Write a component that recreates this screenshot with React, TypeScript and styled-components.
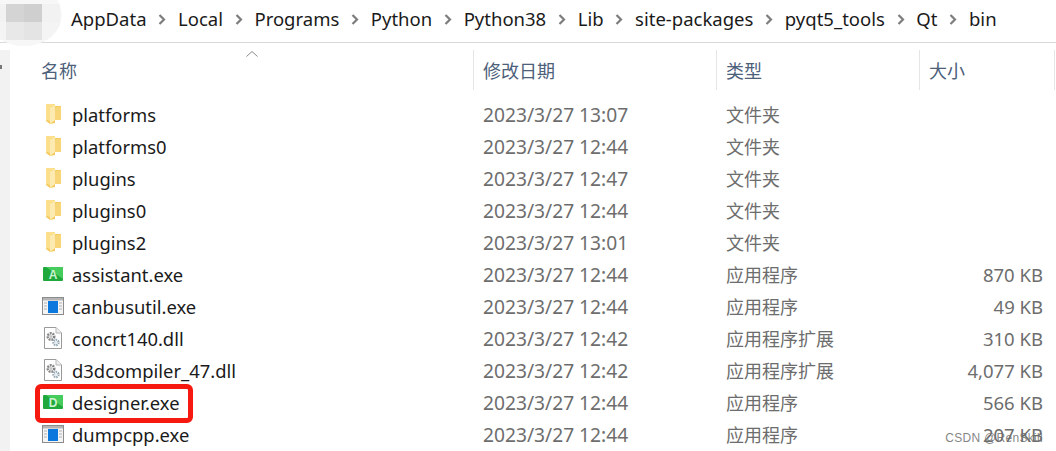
import React from 'react';
import styled, { createGlobalStyle } from 'styled-components';

const GlobalStyle = createGlobalStyle`
  html, body {
    margin: 0;
    padding: 0;
    background: #fff;
    overflow: hidden;
  }
  * {
    box-sizing: border-box;
  }
`;

const Window = styled.div`
  position: relative;
  width: 1056px;
  height: 451px;
  overflow: hidden;
  background: #fff;
  font-family: 'Noto Sans', 'Noto Sans CJK SC', sans-serif;
  font-size: 18px;
`;

const PathBar = styled.div`
  display: flex;
  align-items: center;
  gap: 11.75px;
  height: 43px;
  padding: 0 0 4px 71px;
  border-bottom: 1px solid #d9d9d9;
  color: #1a1a1a;
  font-size: 18.5px;
`;

const Crumb = styled.span`
  line-height: 1;
`;

const Blur = styled.div`
  position: absolute;
  left: -14px;
  top: -16px;
  width: 76px;
  height: 62px;
  border-radius: 50%;
  overflow: hidden;
  display: grid;
  grid-template-columns: repeat(4, 18px);
  grid-auto-rows: 18px;
  padding: 20px 0 0 2px;
  background: #f7f7f7;
`;

const Pixel = styled.i<{ $c: string }>`
  background: ${(p) => p.$c};
`;

const Main = styled.div`
  display: flex;
  height: 408px;
`;

const Gutter = styled.div`
  position: relative;
  width: 10px;
  margin-top: 7px;
  background: #f2f2f2;
  flex: none;
`;

const ScrollMark = styled.div`
  position: absolute;
  left: 0;
  top: 15px;
  width: 2px;
  height: 4px;
  background: #777;
`;

const Table = styled.div`
  flex: 1;
  padding-top: 7px;
`;

const Head = styled.div`
  position: relative;
  display: grid;
  grid-template-columns: 464px 243px 203px 135px;
  height: 40px;
  margin-bottom: 8px;
  color: #4c607a;
`;

const HeadCell = styled.div<{ $first?: boolean }>`
  display: flex;
  align-items: center;
  padding-left: ${(p) => (p.$first ? '31px' : '9px')};
  border-right: ${(p) => (p.$first ? 'none' : '1px solid #e5e5e5')};
  border-left: ${(p) => (p.$first ? 'none' : '1px solid #e5e5e5')};
  margin-left: ${(p) => (p.$first ? '0' : '-1px')};
`;

const SortMark = styled.svg`
  position: absolute;
  left: 236px;
  top: 1px;
`;

const Row = styled.div`
  display: grid;
  grid-template-columns: 463px 243px 203px 124px;
  height: 32px;
  align-items: center;
  color: #6d6d6d;
`;

const NameCell = styled.div`
  display: flex;
  align-items: center;
  padding-left: 31px;
  color: #1a1a1a;
  font-size: 18.4px;
`;

const IconSlot = styled.div`
  display: flex;
  justify-content: center;
  width: 24px;
  margin-right: 7px;
`;

const DateCell = styled.div`
  padding-left: 10px;
  font-size: 19.2px;
`;

const Cell = styled.div`
  padding-left: 10px;
`;

const SizeCell = styled.div`
  text-align: right;
  font-size: 18.5px;
`;

const Highlight = styled.div`
  position: absolute;
  left: 35px;
  top: 384px;
  width: 158px;
  height: 39px;
  border: 5px solid #f5190f;
  border-radius: 6px;
`;

const Watermark = styled.div`
  position: absolute;
  right: 13px;
  bottom: 6px;
  font-family: 'Liberation Sans', sans-serif;
  font-size: 12px;
  letter-spacing: 0.3px;
  color: rgba(110, 110, 110, 0.85);
`;

const FolderIcon = () => (
  <svg width="15" height="20" viewBox="0 0 15 20">
    <path d="M0 0h9v2h6v14H9v3l-5 1-4-3z" fill="#f4c95e" />
    <path d="M0 0h9v15H4v2l-4-1z" fill="#fbdf8c" />
    <path d="M4 4l5-3v15l-5 4z" fill="#fdeab0" />
    <path d="M9 3h6v13H9z" fill="#f8d677" />
  </svg>
);

const AppIcon = ({ letter }: { letter: string }) => (
  <svg width="20" height="14" viewBox="0 0 20 14">
    <rect width="20" height="14" rx="1" fill="#1fa83c" />
    <path d="M3 0h16a1 1 0 0 1 1 1v11L3 0z" fill="#45cc5c" />
    <text
      x="10"
      y="11.5"
      textAnchor="middle"
      fontSize="12"
      fontWeight="700"
      fontFamily="'Liberation Sans', sans-serif"
      fill="#c9f2cf"
    >
      {letter}
    </text>
  </svg>
);

const WindowIcon = () => (
  <svg width="22" height="18" viewBox="0 0 22 18">
    <rect x="0.5" y="0.5" width="21" height="17" fill="#f4f4f4" stroke="#8c8c8c" />
    <rect x="1" y="1" width="20" height="2.5" fill="#b5b5b5" />
    <rect x="6" y="4" width="10" height="12" fill="#0a78dc" />
    <path d="M2 6h3M2 9h3M2 12h3M17 6h3M17 9h3M17 12h3" stroke="#b0b0b0" />
  </svg>
);

const DllIcon = () => (
  <svg width="18" height="22" viewBox="0 0 18 22">
    <path d="M0.5 0.5H12L17.5 6V21.5H0.5z" fill="#fff" stroke="#9a9a9a" />
    <path d="M12 .5V6h5.5" fill="#f0f0f0" stroke="#b5b5b5" />
    <circle cx="7" cy="9.5" r="3.2" fill="none" stroke="#858585" strokeWidth="2.6" strokeDasharray="1.8 0.9" />
    <circle cx="7" cy="9.5" r="1.6" fill="#c9c9c9" />
    <circle cx="12" cy="15.5" r="2.6" fill="none" stroke="#93a7b5" strokeWidth="2.2" strokeDasharray="1.5 0.8" />
    <circle cx="12" cy="15.5" r="1.2" fill="#dfe6ea" />
  </svg>
);

type Kind = 'folder' | 'a' | 'd' | 'win' | 'dll';

const files: { name: string; date: string; type: string; size?: string; kind: Kind }[] = [
  { name: 'platforms', date: '2023/3/27 13:07', type: '文件夹', kind: 'folder' },
  { name: 'platforms0', date: '2023/3/27 12:44', type: '文件夹', kind: 'folder' },
  { name: 'plugins', date: '2023/3/27 12:47', type: '文件夹', kind: 'folder' },
  { name: 'plugins0', date: '2023/3/27 12:44', type: '文件夹', kind: 'folder' },
  { name: 'plugins2', date: '2023/3/27 13:01', type: '文件夹', kind: 'folder' },
  { name: 'assistant.exe', date: '2023/3/27 12:44', type: '应用程序', size: '870 KB', kind: 'a' },
  { name: 'canbusutil.exe', date: '2023/3/27 12:44', type: '应用程序', size: '49 KB', kind: 'win' },
  { name: 'concrt140.dll', date: '2023/3/27 12:42', type: '应用程序扩展', size: '310 KB', kind: 'dll' },
  { name: 'd3dcompiler_47.dll', date: '2023/3/27 12:42', type: '应用程序扩展', size: '4,077 KB', kind: 'dll' },
  { name: 'designer.exe', date: '2023/3/27 12:44', type: '应用程序', size: '566 KB', kind: 'd' },
  { name: 'dumpcpp.exe', date: '2023/3/27 12:44', type: '应用程序', size: '207 KB', kind: 'win' },
];

const crumbs = ['AppData', 'Local', 'Programs', 'Python', 'Python38', 'Lib', 'site-packages', 'pyqt5_tools', 'Qt', 'bin'];

const blurColors = ['#f2f2f2', '#d4d4d4', '#cfcfcf', '#f2f2f2', '#f4f4f4', '#e8e8e8', '#e4e4e4', '#f4f4f4'];

const icon = (kind: Kind) => {
  if (kind === 'folder') return <FolderIcon />;
  if (kind === 'a') return <AppIcon letter="A" />;
  if (kind === 'd') return <AppIcon letter="D" />;
  if (kind === 'win') return <WindowIcon />;
  return <DllIcon />;
};

function App() {
  return (
    <Window>
      <GlobalStyle />
      <PathBar>
        {crumbs.map((c, i) => (
          <React.Fragment key={c}>
            {i > 0 && (
              <svg width="8" height="11" viewBox="0 0 8 11">
                <path d="M1.5 1l4.5 4.5-4.5 4.5" fill="none" stroke="#7d7d7d" strokeWidth="2.2" />
              </svg>
            )}
            <Crumb>{c}</Crumb>
          </React.Fragment>
        ))}
      </PathBar>
      <Blur>
        {blurColors.map((c, i) => (
          <Pixel key={i} $c={c} />
        ))}
      </Blur>
      <Main>
        <Gutter>
          <ScrollMark />
        </Gutter>
        <Table>
          <Head>
            <HeadCell $first>名称</HeadCell>
            <HeadCell>修改日期</HeadCell>
            <HeadCell>类型</HeadCell>
            <HeadCell>大小</HeadCell>
            <SortMark width="12" height="6" viewBox="0 0 12 6">
              <path d="M.5 5.5L6 .5l5.5 5" fill="none" stroke="#8a8a8a" />
            </SortMark>
          </Head>
          {files.map((f) => (
            <Row key={f.name}>
              <NameCell>
                <IconSlot>{icon(f.kind)}</IconSlot>
                {f.name}
              </NameCell>
              <DateCell>{f.date}</DateCell>
              <Cell>{f.type}</Cell>
              <SizeCell>{f.size}</SizeCell>
            </Row>
          ))}
        </Table>
      </Main>
      <Highlight />
      <Watermark>CSDN @RenSkill</Watermark>
    </Window>
  );
}

export default App;
